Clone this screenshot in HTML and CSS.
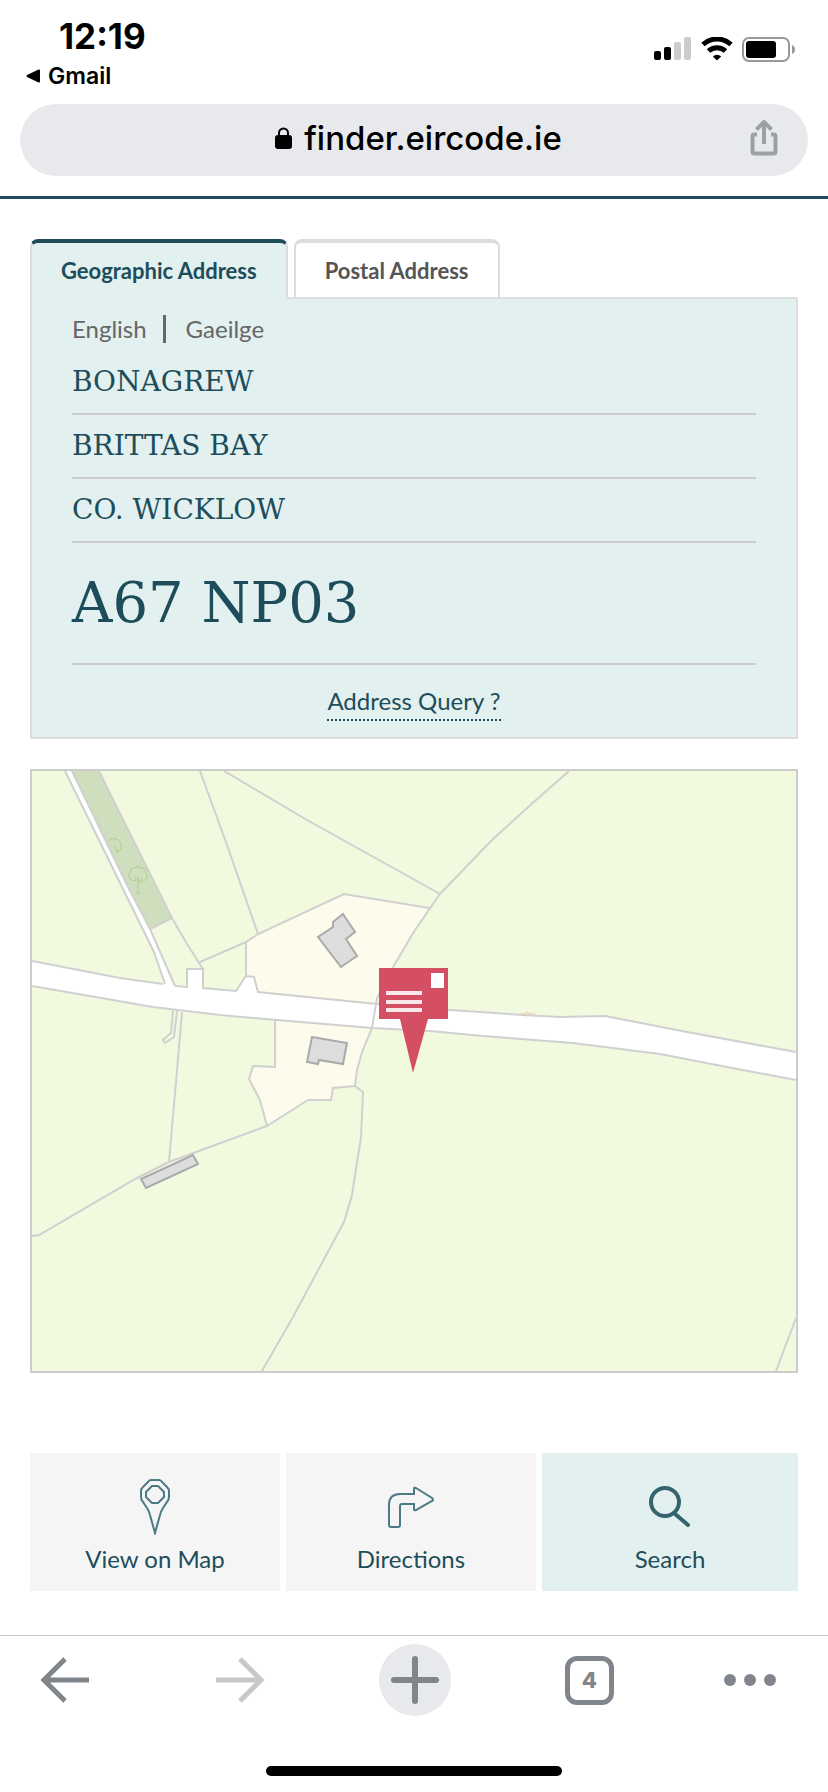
FILE: index.html
```
<!DOCTYPE html>
<html lang="en">

<head>
    <meta charset="UTF-8">
    <title>Eircode Finder</title>
    <meta name="viewport" content="width=device-width, initial-scale=1">
    <link rel="stylesheet" href="styles.css">
</head>

<body>
    <div class="status">
        <div class="clock">
            <span class="time">12:19</span>
            <a class="back_app" href="#">
                <svg width="15" height="14" viewBox="0 0 15 14"><path d="M1.500 7 13 1.500v11z" stroke="#000" stroke-width="2" stroke-linejoin="round"/></svg>
                Gmail
            </a>
        </div>
        <div class="signals">
            <svg width="38" height="24" viewBox="0 0 38 24">
                <rect x="0" y="14" width="7" height="9" rx="2"/>
                <rect x="10" y="10" width="7" height="13" rx="2"/>
                <rect x="20" y="5" width="7" height="18" rx="2" fill="#ccc"/>
                <rect x="30" y="0" width="7" height="23" rx="2" fill="#ccc"/>
            </svg>
            <svg width="32" height="24" viewBox="0 0 32 24">
                <path d="M2 7.500a20.500 20.500 0 0 1 28 0M7.500 14a12.500 12.500 0 0 1 17 0" fill="none" stroke="#000" stroke-width="5"/>
                <path d="M16 23.500 11.800 19.400a6.300 6.300 0 0 1 8.400 0z"/>
            </svg>
            <svg width="54" height="26" viewBox="0 0 54 26">
                <rect x="1" y="1" width="46" height="23" rx="6" fill="none" stroke="#999" stroke-width="2"/>
                <rect x="4" y="4" width="30" height="17" rx="3"/>
                <path d="M50 8q3 1.500 3 4.500t-3 4.500z" fill="#999"/>
            </svg>
        </div>
    </div>

    <div class="address_bar">
        <button class="url" type="button">
            <svg width="18" height="22" viewBox="0 0 18 22">
                <rect x="1" y="8" width="17" height="14" rx="3"/>
                <path d="M5 10V6a4.500 4.500 0 0 1 9 0v4" fill="none" stroke="#000" stroke-width="2"/>
            </svg>
            finder.eircode.ie
        </button>
        <button class="share" type="button" aria-label="Share">
            <svg width="28" height="36" viewBox="0 0 28 36" fill="none" stroke="#9aa0a6" stroke-width="4">
                <path d="M7 14.500H4.500a2 2 0 0 0-2 2V31.500a2 2 0 0 0 2 2h19a2 2 0 0 0 2-2v-15a2 2 0 0 0-2-2H21"/>
                <path d="M14 24V3M6.500 9.500 14 2l7.500 7.500"/>
            </svg>
        </button>
    </div>

    <div class="page">
        <div class="tabs">
            <button class="tab active" type="button">Geographic Address</button>
            <button class="tab" type="button">Postal Address</button>
        </div>
        <div class="address">
            <div class="langs">
                <a href="#">English</a>
                <a href="#">Gaeilge</a>
            </div>
            <ul>
                <li>BONAGREW</li>
                <li>BRITTAS BAY</li>
                <li>CO. WICKLOW</li>
                <li class="eircode">A67 NP03</li>
            </ul>
            <div class="query">
                <a href="#">Address Query ?</a>
            </div>
        </div>

        <div class="map">
            <svg viewBox="0 0 764 600" preserveAspectRatio="xMidYMid slice">
                <rect width="764" height="600" fill="#f1fadf"/>
                <!-- plots -->
                <path fill="#fcfbec" d="M214 171 312 123 397 137 383 159 361 196 345 233 226 221 222 206 214 205zM243 249V296L221 295 217 308 228 329 235 355 276 329H299L301 317 323 315 325 299 330 281 340 257z"/>
                <path fill="#cfdfbe" d="M40 0H67L140 147 118 158 96 116z"/>
                <!-- roads -->
                <path fill="#fff" d="M33 0 122 181 133 217H144L118 158 96 116 40 0z"/>
                <path fill="#fff" d="M0 190 88 207 131 213 155 216V198H171V217L204 220 214 205 222 206 226 221 345 233 418 239 491 244 528 246 573 245 655 261 764 281V309L695 296 628 283 541 272 451 265 398 260 340 257 245 249 188 244 121 236 0 215z"/>
                <g class="lines">
                    <path d="M33 0 122 181 133 213M40 0 96 116 118 158 143 215M67 0 140 147 118 158M140 147 155 173 171 198"/>
                    <path d="M0 190 88 207 131 213M143 215 155 216V198H171V217L204 220 214 205 222 206 226 221 345 233 418 239 491 244 528 246 573 245 655 261 764 281"/>
                    <path d="M0 215 121 236 188 244 245 249 340 257 398 260 451 265 541 272 628 283 695 296 764 309"/>
                    <path d="M168 191 214 171 226 163 312 123 397 137M214 171V205M168 0 195 74 226 163M192 0 275 49 408 123"/>
                    <path d="M537 0 495 37 460 69 408 123 383 159 361 196 345 227 340 257 330 281 325 299 323 315 331 321 329 366 320 424 312 451 261 546 230 600"/>
                    <path d="M243 249V296L221 295 217 308 228 329 235 355 276 329H299L301 317 323 315"/>
                    <path d="M235 355 175 377 137 391 105 407 7 464 0 465M150 241 145 299 137 391M744 600 764 547"/>
                    <path d="M141 240 139 262 131 269 133 272 142 266 145 240"/>
                </g>
                <!-- buildings -->
                <g class="buildings">
                    <path d="M311 143 323 161 314 168 325 185 309 196 286 166 301 156V151z"/>
                    <path d="M280 266 315 272 311 293 287 289 286 293 275 291z"/>
                    <path d="M161 384 166 393 114 417 109 408z"/>
                </g>
                <!-- trees -->
                <g class="trees">
                    <path d="M98 108q-3-4 0-6 0-5 4-5 4-3 7 0 5 0 5 5 3 3 0 6-2 4-6 2M98 108q3 3 6 1M106 122V105M103 122h6M106 112l5-5M106 110l-4-4"/>
                    <path d="M76 70q4-4 8-2 5 1 5 6 1 5-4 7M85 82l-2-7"/>
                </g>
                <path d="M487 243h5l3-2 3 2h5M492 243l3 2 3-2" fill="none" stroke="#dfc9b0"/>
                <!-- marker -->
                <g class="marker">
                    <path fill="#d44f63" d="M347 197H416V248H396L381 302 368 248H347z"/>
                    <path fill="#fff" d="M399 202h13v15h-13z"/>
                    <path d="M354 222h36M354 231h36M354 239h36" stroke="#fae8ea" stroke-width="4"/>
                </g>
            </svg>
        </div>

        <div class="actions">
            <a href="#">
                <svg width="32" height="57" viewBox="0 0 32 57">
                    <path d="M12 2h8q2 0 3 2l5 5q2 2 2 4v6q0 3-2 5l-4 6q-2 3-3 7L16 55 11 37q-1-4-3-7l-4-6q-2-2-2-5v-6q0-2 2-4l5-5q1-2 3-2z"/>
                    <path d="M13 8h6l6 6v5l-6 6h-6l-6-6v-5z"/>
                </svg>
                View on Map
            </a>
            <a href="#">
                <svg width="48" height="57" viewBox="0 0 48 57">
                    <path d="M2 47V27Q2 16 13 16H27V11q0-2 2-1L45 20q2 2 0 3L29 32q-2 1-2-1V26H15q-2 0-2 2V47q0 2-2 2H4q-2 0-2-2z"/>
                </svg>
                Directions
            </a>
            <a class="search" href="#">
                <svg width="42" height="57" viewBox="0 0 42 57">
                    <circle cx="16" cy="24" r="14"/>
                    <path d="M25 35 39 47" stroke-linecap="round"/>
                </svg>
                Search
            </a>
        </div>
    </div>

    <div class="toolbar">
        <button type="button" aria-label="Back">
            <svg width="50" height="50" viewBox="0 0 50 50"><path d="M49 25H5M25 4 4 25l21 21"/></svg>
        </button>
        <button class="off" type="button" aria-label="Forward">
            <svg width="50" height="50" viewBox="0 0 50 50"><path d="M1 25H45M25 4l21 21-21 21"/></svg>
        </button>
        <button class="new_tab" type="button" aria-label="New tab">
            <svg width="50" height="50" viewBox="0 0 50 50"><path d="M4 25H46M25 4V46" stroke-width="6" stroke-linecap="round"/></svg>
        </button>
        <button type="button" aria-label="Open tabs"><span class="count">4</span></button>
        <button class="menu" type="button" aria-label="Menu">
            <svg width="52" height="12" viewBox="0 0 52 12" class="dots"><circle cx="6" cy="6" r="6"/><circle cx="26" cy="6" r="6"/><circle cx="46" cy="6" r="6"/></svg>
        </button>
    </div>
    <div class="home"></div>
</body>

</html>
```
FILE: styles.css
```
* {
    box-sizing: border-box;
}

body {
    margin: 0;
    background: #fff;
    font-family: Inter, "Liberation Sans", sans-serif;
    color: #000;
}

ul {
    margin: 0;
    padding: 0;
    list-style: none;
}

a {
    color: inherit;
    text-decoration: none;
}

button {
    margin: 0;
    padding: 0;
    border: 0;
    background: none;
    font: inherit;
    color: inherit;
    cursor: pointer;
}

svg {
    display: block;
    flex-shrink: 0;
}

.status {
    display: flex;
    justify-content: space-between;
    padding: 16px 32px 10px 26px;
}

.status .time {
    display: block;
    padding-left: 33px;
    font-size: 35px;
    line-height: 40px;
    font-weight: 700;
}

.status .back_app {
    display: flex;
    align-items: center;
    gap: 7px;
    padding-top: 2px;
    font-size: 23px;
    line-height: 36px;
    font-weight: 600;
}

.status .signals {
    display: flex;
    gap: 9px;
    padding-top: 21px;
}

.address_bar {
    display: flex;
    align-items: center;
    margin: 0 20px 20px;
    padding: 0 30px 4px 66px;
    height: 72px;
    border-radius: 36px;
    background: #e8e9ed;
}

.address_bar .url {
    flex: 1;
    display: flex;
    justify-content: center;
    align-items: center;
    gap: 12px;
    font-size: 33px;
    line-height: 40px;
    font-weight: 500;
}

.page {
    padding: 40px 30px 44px;
    border-top: 3px solid #1d4d5a;
    font-family: Lato, "Open Sans", sans-serif;
    color: #1d4d5a;
}

.tabs {
    display: flex;
    gap: 6px;
    margin-bottom: -2px;
}

.tabs .tab {
    position: relative;
    padding: 13px 29px;
    border: 2px solid #ddd;
    border-top-width: 4px;
    border-bottom: 0;
    border-radius: 8px 8px 0 0;
    font-size: 22px;
    line-height: 30px;
    font-weight: 700;
    color: #555;
}

.tabs .active {
    border-top-color: #1d4d5a;
    background: #e2f0ef;
    color: #1d4d5a;
}

.address {
    padding: 14px 40px 16px;
    border: 2px solid #ddd;
    background: #e2f0ef;
}

.langs {
    display: flex;
    align-items: center;
    height: 32px;
    margin-bottom: 6px;
    font-size: 24px;
    line-height: 28px;
    color: #666;
}

.langs a + a {
    margin-left: 16px;
    padding-left: 20px;
    border-left: 3px solid #666;
}

.address li {
    padding: 14px 0;
    border-bottom: 2px solid #ccc;
    font-family: "DejaVu Serif", serif;
    font-size: 28px;
    line-height: 34px;
}

.address .eircode {
    padding: 20px 0;
    font-size: 56px;
    line-height: 80px;
}

.query {
    padding-top: 18px;
    text-align: center;
    font-size: 24px;
    line-height: 36px;
}

.query a {
    display: inline-block;
    border-bottom: 2px dotted #1d4d5a;
}

.map {
    margin-top: 30px;
    border: 2px solid #ccc;
}

.map svg {
    width: 100%;
}

.map .lines {
    fill: none;
    stroke: #d0d0d0;
    stroke-width: 2;
}

.map .buildings {
    fill: #ddd;
    stroke: #aaa;
    stroke-width: 2;
}

.map .trees {
    fill: none;
    stroke: #aacf94;
}

.actions {
    display: grid;
    grid-template-columns: 125fr 125fr 128fr;
    gap: 6px;
    margin-top: 80px;
}

.actions a {
    display: flex;
    flex-direction: column;
    align-items: center;
    gap: 6px;
    padding: 25px 0 14px;
    background: #f5f5f5;
    font-size: 24px;
    line-height: 36px;
}

.actions svg {
    fill: none;
    stroke: #4b7984;
    stroke-width: 2;
}

.actions .search {
    background: #e2f0ef;
}

.actions .search svg {
    stroke: #35646f;
    stroke-width: 4;
}

.toolbar {
    display: flex;
    justify-content: space-between;
    padding: 8px 56px 8px 29px;
    border-top: 1px solid #c8c8c8;
}

.toolbar button {
    display: flex;
    justify-content: center;
    align-items: center;
    width: 72px;
    height: 72px;
    border-radius: 50%;
    color: #80868b;
}

.toolbar .menu {
    width: 44px;
}

.toolbar .off {
    color: #c8c8c8;
}

.toolbar .new_tab {
    background: #e8e9ed;
}

.toolbar svg {
    fill: none;
    stroke: currentColor;
    stroke-width: 5;
}

.toolbar .dots {
    fill: currentColor;
    stroke: none;
}

.toolbar .count {
    width: 49px;
    border: 5px solid #80868b;
    border-radius: 12px;
    font-size: 22px;
    line-height: 39px;
    font-weight: 800;
}

.home {
    width: 296px;
    height: 10px;
    margin: 42px auto 16px;
    border-radius: 5px;
    background: #000;
}
```
